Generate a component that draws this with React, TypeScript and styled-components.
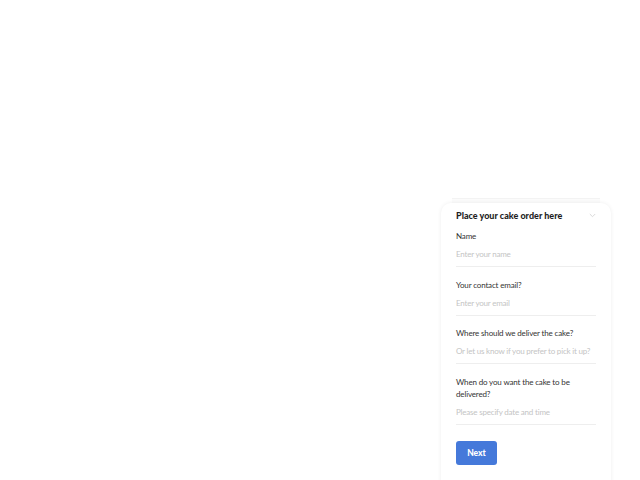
import styled, { createGlobalStyle } from 'styled-components';

const Global = createGlobalStyle`
  html, body { margin: 0; padding: 0; background: #ffffff; }
  body { font-family: "Source Sans Pro", Lato, "Noto Sans", sans-serif; }
  * { box-sizing: border-box; }
`;

const Page = styled.div`
  width: 640px;
  height: 480px;
  overflow: hidden;
  display: flex;
  justify-content: flex-end;
  align-items: flex-start;
  padding: 198px 29px 0 0;
`;

const Widget = styled.div`
  width: 170px;
  height: 300px;
  display: flex;
  flex-direction: column;
`;

const Tab = styled.div`
  height: 5px;
  margin: 0 11px;
  background: #fbfbfb;
  border-top: 1px solid #f3f3f3;
`;

const Card = styled.div`
  flex: 1;
  background: #ffffff;
  border-radius: 10px 10px 0 0;
  box-shadow: 0 0 4px rgba(0, 0, 0, 0.07);
  padding: 0 15px;
  display: flex;
  flex-direction: column;
`;

const Header = styled.div`
  display: flex;
  align-items: center;
  justify-content: space-between;
  height: 24px;
`;

const Title = styled.h2`
  margin: 0;
  font-size: 9px;
  font-weight: 900;
  color: #1f1f1f;
`;

const Field = styled.div<{ $first?: boolean }>`
  margin-top: ${(p) => (p.$first ? '3px' : '11.5px')};
  border-bottom: 1px solid #eeeeee;
  padding-bottom: 6px;
`;

const Label = styled.label`
  display: block;
  font-size: 8px;
  line-height: 12px;
  letter-spacing: -0.15px;
  color: #333333;
`;

const Placeholder = styled.div`
  margin-top: 6px;
  font-size: 8px;
  line-height: 12px;
  letter-spacing: -0.2px;
  color: #c4c4c4;
  white-space: nowrap;
`;

const Actions = styled.div`
  margin-top: 15px;
`;

const Button = styled.button`
  width: 41px;
  height: 24px;
  border: none;
  border-radius: 3px;
  background: #4579da;
  color: #ffffff;
  font-family: inherit;
  font-size: 8.5px;
  font-weight: 900;
  padding: 0;
`;

const Chevron = () => (
  <svg width="7" height="5" viewBox="0 0 7 5">
    <path d="M0.8 1 L3.5 3.7 L6.2 1" fill="none" stroke="#cfcfcf" strokeWidth="0.8" />
  </svg>
);

const fields = [
  { label: 'Name', placeholder: 'Enter your name' },
  { label: 'Your contact email?', placeholder: 'Enter your email' },
  { label: 'Where should we deliver the cake?', placeholder: 'Or let us know if you prefer to pick it up?' },
  { label: 'When do you want the cake to be delivered?', placeholder: 'Please specify date and time' },
];

export default function App() {
  return (
    <Page>
      <Global />
      <Widget>
        <Tab />
        <Card>
          <Header>
            <Title>Place your cake order here</Title>
            <Chevron />
          </Header>
          {fields.map((f, i) => (
            <Field key={f.label} $first={i === 0}>
              <Label>{f.label}</Label>
              <Placeholder>{f.placeholder}</Placeholder>
            </Field>
          ))}
          <Actions>
            <Button>Next</Button>
          </Actions>
        </Card>
      </Widget>
    </Page>
  );
}
